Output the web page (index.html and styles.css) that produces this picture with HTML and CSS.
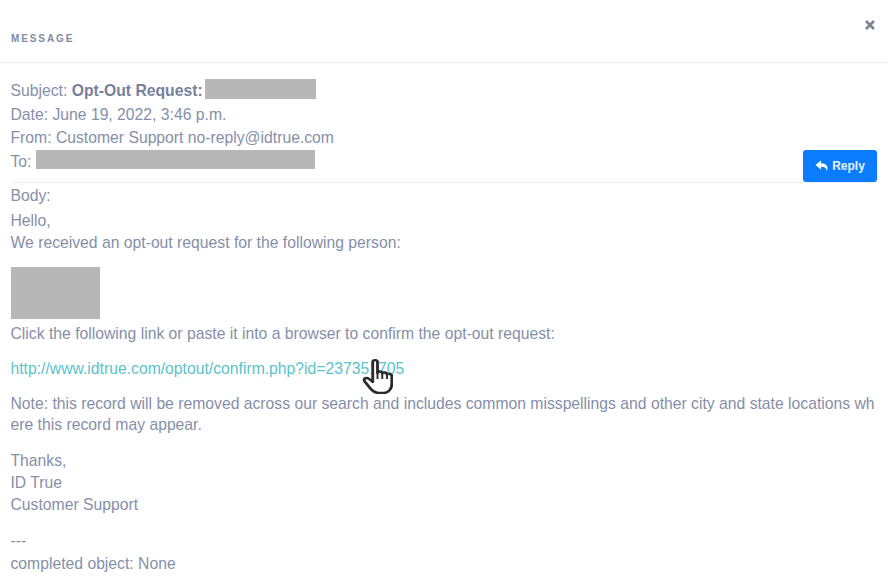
FILE: index.html
```html
<!DOCTYPE html>
<html lang="en">
<head>
    <meta charset="UTF-8">
    <meta name="viewport" content="width=device-width, initial-scale=1.0">
    <title>Message</title>
    <link rel="stylesheet" href="styles.css">
</head>
<body>
    <div class="modal">
        <div class="modal-header">
            <h3 class="modal-title">Message</h3>
            <svg class="close-icon" viewBox="0 0 12 12" width="12" height="12">
                <path d="M2 2 L10 10 M10 2 L2 10" />
            </svg>
        </div>
        <div class="modal-body">
            <div class="meta">
                <div class="meta-lines">
                    <div class="line">Subject: <strong>Opt-Out Request:</strong><span class="redact redact-subject"></span></div>
                    <div class="line">Date: June 19, 2022, 3:46 p.m.</div>
                    <div class="line">From: Customer Support no-reply@idtrue.com</div>
                    <div class="line">To: <span class="redact redact-to"></span></div>
                </div>
                <button class="reply-button" type="button">
                    <svg viewBox="0 0 14 12" width="14" height="12">
                        <path d="M6 0.5 L0.5 5 L6 9.5 V6.8 C9.5 6.8 11.3 7.8 11.8 11.2 C13.6 7 12 3.4 6 3.3 Z" />
                    </svg>
                    Reply
                </button>
            </div>
            <div class="body-label">Body:</div>
            <div class="message">
                <p class="greeting">Hello,<br>We received an opt-out request for the following person:</p>
                <div class="redact-block"></div>
                <p class="confirm">Click the following link or paste it into a browser to confirm the opt-out request:</p>
                <p class="link-row"><a href="#">http://www.idtrue.com/optout/confirm.php?id=237351705</a></p>
                <p class="note">Note: this record will be removed across our search and includes common misspellings and other city and state locations where this record may appear.</p>
                <p class="thanks">Thanks,<br>ID True<br>Customer Support</p>
                <p class="footer-lines">---<br>completed object: None</p>
            </div>
        </div>
        <svg class="hand-cursor" viewBox="0 0 26 36" width="31" height="36" preserveAspectRatio="none">
            <path d="M9 4 C9 1.5 13 1.5 13 4 V15 C13 13 17 13 17 15.5 C17 14 21 14 21 16.5 C21 15.5 25 15.5 25 18 V26 C25 31 22 35 18 35 H14 C10 35 8 32 6 29 L2 23 C1 20 4 19 6 21 L9 24 Z" />
            <path class="hand-lines" d="M13 15 V21 M17 15.5 V21 M21 16.5 V21" />
        </svg>
    </div>
</body>
</html>
```

FILE: styles.css
```css
body {
    font-family: 'Liberation Sans', Arial, sans-serif;
    background-color: #fff;
    color: #868fa7;
    margin: 0;
    font-size: 15.73px;
    line-height: 21.6px;
}

.modal {
    position: relative;
    height: 586px;
    overflow: hidden;
}

.modal-header {
    display: flex;
    justify-content: space-between;
    height: 62px;
    border-bottom: 1px solid #e9edf4;
    padding: 0 13px 0 11px;
}

.modal-title {
    margin: 31px 0 0;
    font-size: 10px;
    line-height: 16px;
    font-weight: bold;
    letter-spacing: 1.9px;
    text-transform: uppercase;
    color: #7f8aa3;
}

.close-icon {
    margin-top: 19px;
}

.close-icon path {
    fill: none;
    stroke: #7a8494;
    stroke-width: 2.6;
}

.modal-body {
    padding: 16px 12px 0 10.5px;
}

.meta {
    display: flex;
    justify-content: space-between;
    align-items: flex-end;
    height: 103px;
    border-bottom: 1px solid #eff1f5;
}

.line {
    display: flex;
    align-items: center;
    height: 23.4px;
    white-space: pre;
}

.meta-lines {
    margin-bottom: 9px;
}

.line strong {
    color: #76819a;
}

.redact {
    display: inline-block;
    margin-bottom: 4px;
    background-color: #b7b7b7;
}

.redact-subject {
    width: 111px;
    height: 20px;
    margin-left: 2px;
}

.redact-to {
    width: 279px;
    height: 19px;
}

.reply-button {
    display: flex;
    align-items: center;
    justify-content: center;
    gap: 3px;
    width: 74px;
    height: 32px;
    padding: 0;
    background-color: #0a7cff;
    color: #e6f1ff;
    border: none;
    border-radius: 3px;
    font-family: inherit;
    font-size: 12px;
    font-weight: bold;
}

.reply-button svg {
    fill: #fff;
}

.body-label {
    margin-top: 2px;
}

.message p {
    margin: 0;
}

.greeting {
    padding-top: 3.5px;
}

.redact-block {
    width: 89px;
    height: 52px;
    margin-top: 14px;
    background-color: #b7b7b7;
}

.confirm {
    padding-top: 4px;
}

.link-row {
    padding-top: 13px;
}

.link-row a {
    color: #5cc3ca;
    text-decoration: none;
}

.note {
    padding-top: 14px;
    line-height: 21px;
    word-break: break-all;
}

.thanks {
    padding-top: 15px;
}

.footer-lines {
    padding-top: 15px;
    line-height: 22.6px;
}

/* cursor sitting over the link in the screenshot */
.hand-cursor {
    position: absolute;
    left: 362px;
    top: 358px;
}

.hand-cursor path {
    fill: #fff;
    stroke: #2b2b2b;
    stroke-width: 2.4;
    stroke-linejoin: round;
}

.hand-cursor .hand-lines {
    fill: none;
    stroke-width: 1.6;
}
```
